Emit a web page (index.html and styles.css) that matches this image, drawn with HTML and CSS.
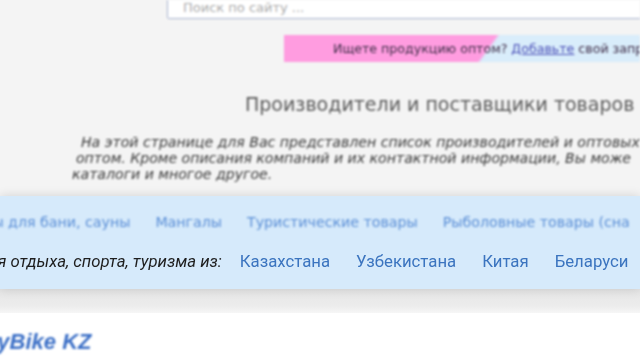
FILE: index.html
```html
<!DOCTYPE html>
<html lang="ru">
<head>
<meta charset="utf-8">
<title>Производители и поставщики товаров</title>
<link rel="stylesheet" href="styles.css">
</head>
<body>
<div class="page">
  <header class="top">
    <div class="search"><span class="placeholder">Поиск по сайту ...</span></div>
    <div class="promo"><span class="promo-text">Ищете продукцию оптом? <a class="promo-link">Добавьте</a> свой запр</span></div>
    <h1 class="title">Производители и поставщики товаров</h1>
    <p class="intro">
      <span class="line l1">На этой странице для Вас представлен список производителей и оптовых</span>
      <span class="line l2">оптом. Кроме описания компаний и их контактной информации, Вы може</span>
      <span class="line l3">каталоги и многое другое.</span>
    </p>
  </header>
  <section class="band">
    <nav class="cats">
      <a class="cat first">Товары для бани, сауны</a>
      <a class="cat">Мангалы</a>
      <a class="cat">Туристические товары</a>
      <a class="cat">Рыболовные товары (сна</a>
    </nav>
    <div class="countries">
      <span class="label">Товары для отдыха, спорта, туризма из:</span>
      <a class="country">Казахстана</a>
      <a class="country">Узбекистана</a>
      <a class="country">Китая</a>
      <a class="country">Беларуси</a>
    </div>
  </section>
  <div class="strip"></div>
  <main class="list">
    <h2 class="company">MyBike KZ</h2>
  </main>
</div>
</body>
</html>
```
FILE: styles.css
```css
html, body {
  margin: 0;
  padding: 0;
}
body {
  width: 640px;
  height: 360px;
  overflow: hidden;
  background: #f4f4f4;
  font-family: "DejaVu Sans", Verdana, sans-serif;
}
.page {
  width: 640px;
  height: 360px;
  overflow: hidden;
  display: flex;
  flex-direction: column;
}
.top {
  height: 196px;
  flex: none;
  filter: blur(1.1px);
  display: flex;
  flex-direction: column;
  white-space: nowrap;
  overflow: hidden;
}
.search {
  margin: -6px 0 0 167px;
  width: 600px;
  height: 21px;
  border: 1px solid #a9b3d0;
  border-radius: 2px;
  background: #ffffff;
  box-sizing: content-box;
  display: flex;
  align-items: center;
  padding-left: 15px;
  padding-top: 2px;
  flex: none;
}
.placeholder {
  font-size: 13px;
  color: #ababab;
}
.promo {
  margin: 16px 0 0 284px;
  width: 356px;
  height: 27px;
  flex: none;
  background: linear-gradient(126deg, #ff9ce0 0, #ff9ce0 172px, #d9edfb 175px, #d9edfb 100%);
  display: flex;
  align-items: center;
  padding-left: 49px;
  box-sizing: border-box;
  overflow: hidden;
}
.promo-text {
  font-size: 12.6px;
  color: #3f2d48;
}
.promo-link {
  color: #4a4fb8;
  text-decoration: underline;
}
.title {
  margin: 29px 0 0 245px;
  font-size: 19px;
  font-weight: normal;
  color: #5a5a5a;
  line-height: 26px;
}
.intro {
  margin: 17px 0 0 0;
  font-size: 14.1px;
  font-style: italic;
  line-height: 16px;
  color: #3a3a3a;
  display: flex;
  flex-direction: column;
}
.line {
  display: block;
}
.l1 {
  margin-left: 81px;
}
.l2 {
  margin-left: 76px;
}
.l3 {
  margin-left: 72px;
}
.band {
  height: 93px;
  flex: none;
  background: #d6eafb;
  box-shadow: 0 0 10px rgba(0, 0, 0, 0.14);
  position: relative;
  z-index: 1;
  white-space: nowrap;
  display: flex;
  flex-direction: column;
  overflow: hidden;
}
.cats {
  display: flex;
  gap: 25px;
  margin-top: 16px;
  height: 20px;
  align-items: center;
  filter: blur(0.9px);
}
.cat {
  font-size: 14.2px;
  color: #5a8ed6;
}
.cat.first {
  margin-left: -51px;
}
.countries {
  display: flex;
  align-items: center;
  gap: 26px;
  margin-top: 18px;
  height: 22px;
  font-family: Roboto, "Noto Sans", sans-serif;
  font-size: 16.75px;
  filter: blur(0.4px);
}
.label {
  font-style: italic;
  color: #1e1e1e;
  margin-left: -84px;
  margin-right: -8px;
}
.country {
  color: #3b74bf;
}
.strip {
  height: 24px;
  flex: none;
  background: linear-gradient(#e6e6e6, #ececec 70%, #f6f6f6);
}
.list {
  flex: 1;
  background: #ffffff;
  padding-top: 16px;
}
.company {
  margin: 0 0 0 -21px;
  font-family: "Liberation Sans", Arial, sans-serif;
  font-size: 22px;
  font-weight: bold;
  font-style: italic;
  color: #3b6fc6;
  filter: blur(1px);
  line-height: 26px;
}
```
